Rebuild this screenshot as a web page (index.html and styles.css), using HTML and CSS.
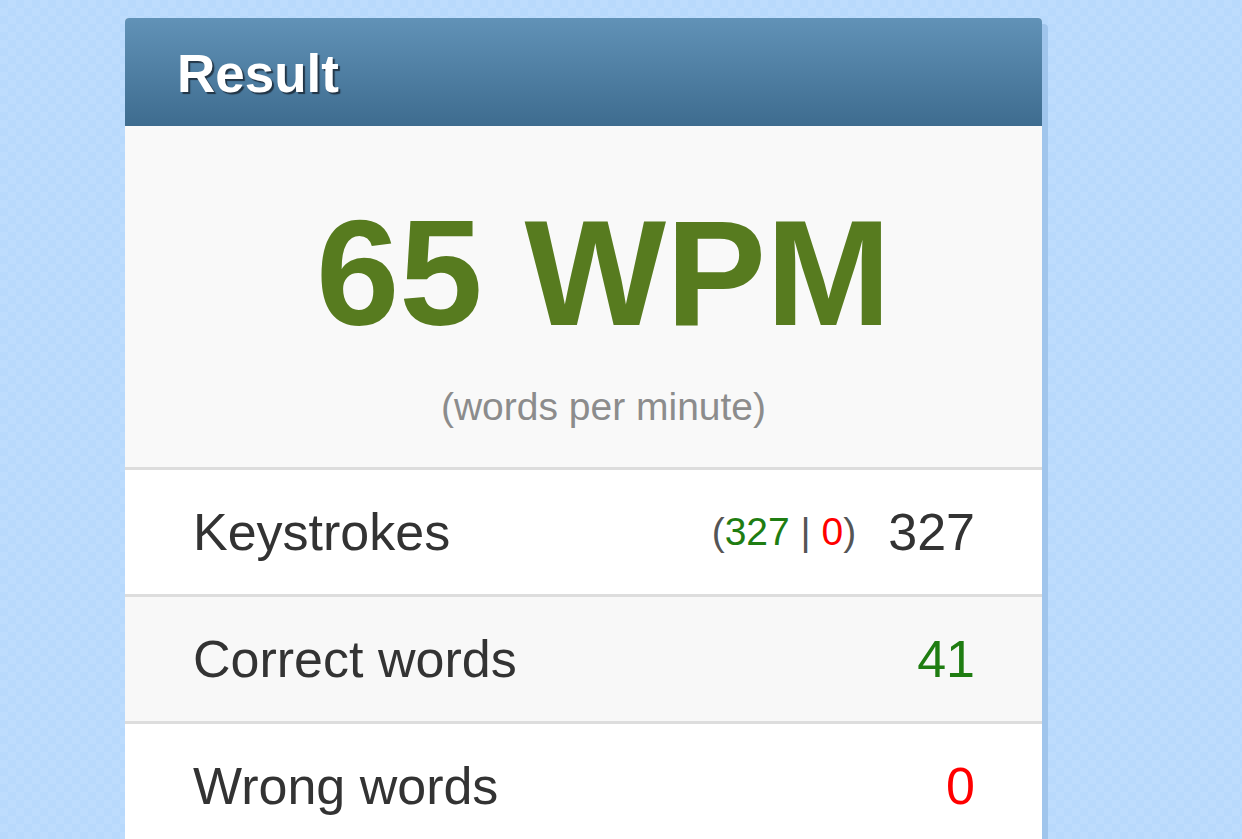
FILE: index.html
```html
<!DOCTYPE html>
<html lang="en">
<head>
<meta charset="utf-8">
<title>Result</title>
<link rel="stylesheet" href="styles.css">
</head>
<body>
<div class="page">
  <section class="panel">
    <header class="panel-head">
      <h2 class="panel-title">Result</h2>
    </header>
    <div class="speed">
      <div class="wpm">65 WPM</div>
      <div class="wpm-note">(words per minute)</div>
    </div>
    <div class="row row-light">
      <span class="label">Keystrokes</span>
      <span class="values">
        <span class="detail">(<span class="good">327</span> | <span class="bad">0</span>)</span>
        <span class="value">327</span>
      </span>
    </div>
    <div class="row row-grey">
      <span class="label">Correct words</span>
      <span class="value good">41</span>
    </div>
    <div class="row row-light">
      <span class="label">Wrong words</span>
      <span class="value bad">0</span>
    </div>
  </section>
</div>
</body>
</html>
```

FILE: styles.css
```css
html, body {
  margin: 0;
  padding: 0;
}

body {
  background-color: #bcdcfe;
  background-image: repeating-conic-gradient(#bddcfd 0 25%, #b8d9fc 0 50%);
  background-size: 16px 16px;
  font-family: "Liberation Sans", Arial, sans-serif;
  height: 839px;
  overflow: hidden;
}

.page {
  padding: 18px 0 0 125px;
}

.panel {
  width: 917px;
  border-radius: 4px 4px 0 0;
  box-shadow: 6px 6px 0 #a0c5ec;
  background: #f9f9f9;
}

.panel-head {
  height: 108px;
  display: flex;
  align-items: center;
  padding-left: 52px;
  border-radius: 4px 4px 0 0;
  background: linear-gradient(to bottom, #6192b7, #3e6c8f);
}

.panel-title {
  margin: 0;
  font-size: 53px;
  font-weight: bold;
  color: #ffffff;
  line-height: 1;
  text-shadow: 2px 2px 1px rgba(20, 30, 40, 0.75);
  position: relative;
  top: 1px;
}

.speed {
  padding: 72px 0 41px 40px;
  text-align: center;
  background: #f9f9f9;
}

.wpm {
  font-size: 150px;
  line-height: 150px;
  font-weight: bold;
  color: #577b1f;
}

.wpm-note {
  margin-top: 39px;
  font-size: 39px;
  line-height: 39px;
  color: #8c8c8c;
}

.row {
  height: 124px;
  border-top: 3px solid #dddddd;
  display: flex;
  align-items: center;
  justify-content: space-between;
  padding: 0 67px 0 68px;
}

.row-light {
  background: #ffffff;
}

.row-grey {
  background: #f8f8f8;
}

.label {
  font-size: 52px;
  color: #333333;
}

.values {
  display: flex;
  align-items: center;
  gap: 32px;
}

.detail {
  font-size: 39px;
  color: #555555;
}

.value {
  font-size: 52px;
  color: #333333;
}

.good {
  color: #1f7d12;
}

.bad {
  color: #ff0000;
}
```
